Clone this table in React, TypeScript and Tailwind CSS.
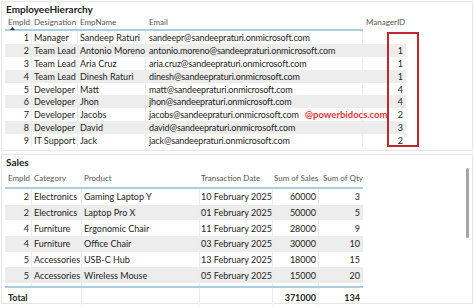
import React from "react";

const emp = [
  ["1", "Manager", "Sandeep Raturi", "sandeepr@sandeepraturi.onmicrosoft.com", ""],
  ["2", "Team Lead", "Antonio Moreno", "antonio.moreno@sandeepraturi.onmicrosoft.com", "1"],
  ["3", "Team Lead", "Aria Cruz", "aria.cruz@sandeepraturi.onmicrosoft.com", "1"],
  ["4", "Team Lead", "Dinesh Raturi", "dinesh@sandeepraturi.onmicrosoft.com", "1"],
  ["5", "Developer", "Matt", "matt@sandeepraturi.onmicrosoft.com", "4"],
  ["6", "Developer", "Jhon", "jhon@sandeepraturi.onmicrosoft.com", "4"],
  ["7", "Developer", "Jacobs", "jacobs@sandeepraturi.onmicrosoft.com", "2"],
  ["8", "Developer", "David", "david@sandeepraturi.onmicrosoft.com", "3"],
  ["9", "IT Support", "Jack", "jack@sandeepraturi.onmicrosoft.com", "2"],
];

const sales = [
  ["2", "Electronics", "Gaming Laptop Y", "10 February 2025", "60000", "3"],
  ["2", "Electronics", "Laptop Pro X", "01 February 2025", "50000", "5"],
  ["4", "Furniture", "Ergonomic Chair", "11 February 2025", "28000", "9"],
  ["4", "Furniture", "Office Chair", "03 February 2025", "30000", "10"],
  ["5", "Accessories", "USB-C Hub", "13 February 2025", "18000", "15"],
  ["5", "Accessories", "Wireless Mouse", "05 February 2025", "15000", "20"],
];

const font = { fontFamily: 'Lato, "Noto Sans", sans-serif' };

function EmployeeHierarchy() {
  return (
    <div className="relative mx-[1px] mt-[1px] h-[150px] border border-[#e6e6e6] bg-white">
      <div className="pl-[4px] pt-[1px] text-[10px] font-bold leading-[12px] text-[#222]">EmployeeHierarchy</div>
      <div className="ml-[3px] w-[401px]">
        <div className="relative flex h-[14px] items-center text-[8px] text-[#555]">
          <div className="w-[27px] pl-[3px]">EmpId</div>
          <div className="w-[46px] pl-[2px]">Designation</div>
          <div className="w-[68px] pl-[2px]">EmpName</div>
          <div className="w-[217px] pl-[3px]">Email</div>
          <div className="w-[43px] pl-[3px]">ManagerID</div>
          <svg className="absolute left-[5px] top-[12px]" width="5" height="3" viewBox="0 0 5 3">
            <path d="M0 3 L2.5 0 L5 3 Z" fill="#333" />
          </svg>
        </div>
        <div className="h-[2px] w-[358px] bg-[#a8cfdf]" />
        {emp.map((r, i) => (
          <div
            key={i}
            className={`flex h-[12.9px] items-center text-[9px] leading-none text-[#252423] ${i % 2 === 1 ? "bg-[#ededed]" : "bg-white"}`}
          >
            <div className="flex h-full w-[27px] items-center justify-end border-r border-[#ececec] pr-[2px]">{r[0]}</div>
            <div className="flex h-full w-[46px] items-center border-r border-[#ececec] pl-[2px] whitespace-nowrap">{r[1]}</div>
            <div className="flex h-full w-[68px] items-center border-r border-[#ececec] pl-[2px] whitespace-nowrap">{r[2]}</div>
            <div className="flex h-full w-[217px] items-center border-r border-[#ececec] pl-[3px] tracking-[-0.15px] whitespace-nowrap">{r[3]}</div>
            <div className="flex h-full w-[43px] items-center justify-end pr-[3px]">{r[4]}</div>
          </div>
        ))}
      </div>
      <div className="absolute left-[385px] top-[30px] h-[115px] w-[32px] border-2 border-[#c4262e]" />
      <div className="absolute left-[303px] top-[107px] text-[9.5px] font-bold leading-[12px] text-[#e8323c]">@powerbidocs.com</div>
    </div>
  );
}

function Sales() {
  const cols = [
    "w-[27px] justify-end pr-[2px]",
    "w-[50px] pl-[2px]",
    "w-[118px] pl-[2px]",
    "w-[73px] pl-[1px]",
    "w-[46px] justify-end pr-[2px]",
    "w-[44px] justify-end pr-[3px]",
  ];
  return (
    <div className="relative mx-[1px] mt-[3px] h-[150px] border border-[#e6e6e6] bg-white">
      <div className="pl-[4px] pt-[1px] text-[10px] font-bold leading-[12px] text-[#222]">Sales</div>
      <div className="ml-[3px] w-[358px]">
        <div className="flex h-[19px] items-center text-[8px] text-[#555]">
          <div className="w-[27px] pl-[3px]">EmpId</div>
          <div className="w-[50px] pl-[2px]">Category</div>
          <div className="w-[118px] pl-[2px]">Product</div>
          <div className="w-[73px] pl-[1px] whitespace-nowrap">Transaction Date</div>
          <div className="w-[46px] pl-[1px] whitespace-nowrap">Sum of Sales</div>
          <div className="w-[44px] pl-[4px] whitespace-nowrap">Sum of Qty</div>
        </div>
        <div className="h-[2px] bg-[#a8cfdf]" />
        {sales.map((r, i) => (
          <div
            key={i}
            className={`flex h-[15.7px] items-center text-[9px] leading-none text-[#252423] ${i % 2 === 1 ? "bg-[#ededed]" : "bg-white"}`}
          >
            {r.map((c, j) => (
              <div
                key={j}
                className={`flex h-full items-center whitespace-nowrap ${j < 5 ? "border-r border-[#ececec]" : ""} ${cols[j]}`}
              >
                {c}
              </div>
            ))}
          </div>
        ))}
        <div className="flex h-[3px]">
          <div className="h-full w-[27px] border-r border-[#ececec]" />
          <div className="h-full w-[50px] border-r border-[#ececec]" />
          <div className="h-full w-[118px] border-r border-[#ececec]" />
          <div className="h-full w-[73px] border-r border-[#ececec]" />
          <div className="h-full w-[46px] border-r border-[#ececec]" />
        </div>
        <div className="h-[2px] bg-[#a8cfdf]" />
        <div className="flex h-[18px] items-center text-[9px] font-bold leading-none text-[#252423]">
          <div className="flex h-full w-[77px] items-center border-r border-[#ececec] pl-[3px]">Total</div>
          <div className="h-full w-[118px] border-r border-[#ececec]" />
          <div className="h-full w-[73px] border-r border-[#ececec]" />
          <div className="flex h-full w-[46px] items-center justify-end border-r border-[#ececec] pr-[2px]">371000</div>
          <div className="flex h-full w-[44px] items-center justify-end pr-[3px]">134</div>
        </div>
      </div>
      <div className="absolute left-[464px] top-[13px] h-[70px] w-[3px] rounded-full bg-[#a6a6a6]" />
    </div>
  );
}

export default function App() {
  return (
    <div className="h-[307px] w-[474px] overflow-hidden bg-white" style={font}>
      <EmployeeHierarchy />
      <Sales />
    </div>
  );
}
